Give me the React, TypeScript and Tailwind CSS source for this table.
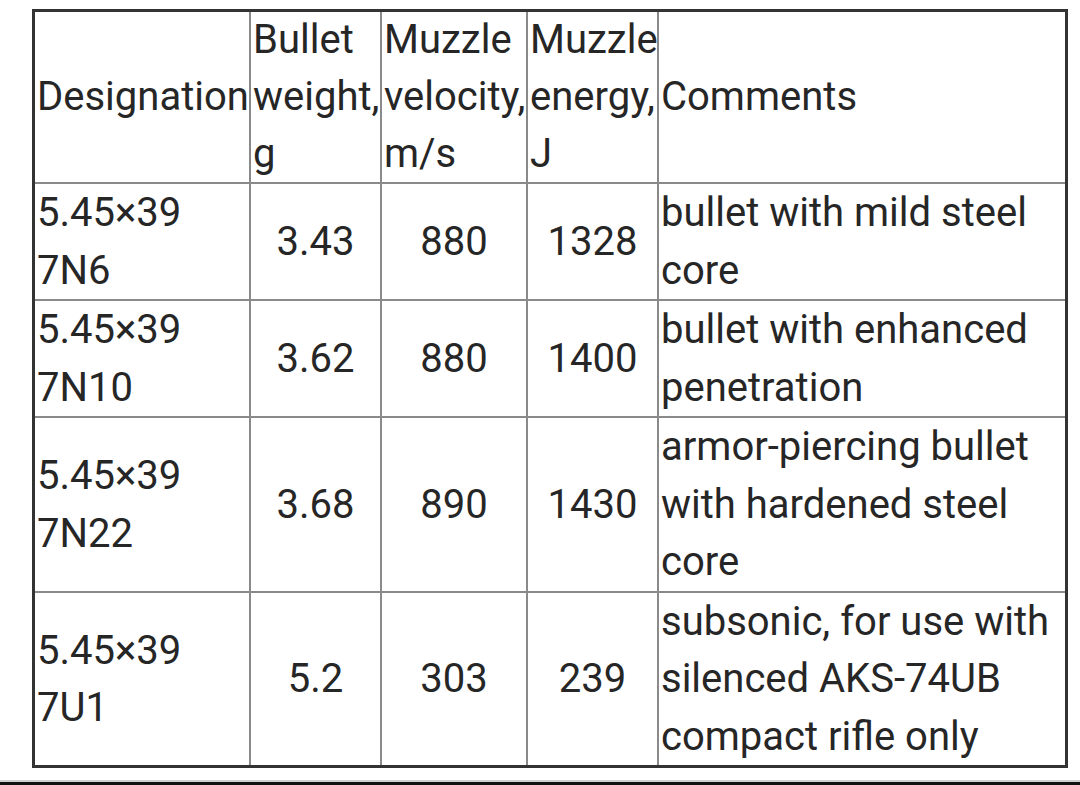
import React from 'react';

type Row = {
  designation: string[];
  weight: string;
  velocity: string;
  energy: string;
  comment: string;
};

const rows: Row[] = [
  { designation: ['5.45×39', '7N6'], weight: '3.43', velocity: '880', energy: '1328', comment: 'bullet with mild steel core' },
  { designation: ['5.45×39', '7N10'], weight: '3.62', velocity: '880', energy: '1400', comment: 'bullet with enhanced penetration' },
  { designation: ['5.45×39', '7N22'], weight: '3.68', velocity: '890', energy: '1430', comment: 'armor-piercing bullet with hardened steel core' },
  { designation: ['5.45×39', '7U1'], weight: '5.2', velocity: '303', energy: '239', comment: 'subsonic, for use with silenced AKS-74UB compact rifle only' },
];

const cell = 'border-2 border-[#8a8a8a] px-[2px] py-0 align-middle';

export default function App() {
  return (
    <div
      className="flex h-[785px] w-[1080px] flex-col bg-white text-[40px] leading-[57.5px] text-[#262626]"
      style={{ fontFamily: 'Roboto, "Noto Sans", sans-serif' }}
    >
      <div className="ml-[32px] mt-[9px] w-[1036px] border-[3px] border-[#333]">
        <table className="w-full table-fixed border-collapse border-hidden">
          <colgroup>
            <col className="w-[215px]" />
            <col className="w-[131px]" />
            <col className="w-[146px]" />
            <col className="w-[131px]" />
            <col className="w-[407px]" />
          </colgroup>
          <thead className="leading-[56.8px]">
            <tr>
              <th className={`${cell} text-left font-normal`}>Designation</th>
              <th className={`${cell} text-left font-normal`}>Bullet weight, g</th>
              <th className={`${cell} text-left font-normal`}>Muzzle velocity, m/s</th>
              <th className={`${cell} text-left font-normal`}>Muzzle energy, J</th>
              <th className={`${cell} text-left font-normal`}>Comments</th>
            </tr>
          </thead>
          <tbody>
            {rows.map((r) => (
              <tr key={r.designation[1]}>
                <td className={`${cell} text-left`}>
                  {r.designation[0]}
                  <br />
                  {r.designation[1]}
                </td>
                <td className={`${cell} text-center`}>{r.weight}</td>
                <td className={`${cell} text-center`}>{r.velocity}</td>
                <td className={`${cell} text-center`}>{r.energy}</td>
                <td className={`${cell} text-left`}>{r.comment}</td>
              </tr>
            ))}
          </tbody>
        </table>
      </div>
      <div className="flex-1" />
      <div className="h-[2px] bg-[#d0d0d0]" />
      <div className="h-[3px] bg-[#111]" />
    </div>
  );
}
